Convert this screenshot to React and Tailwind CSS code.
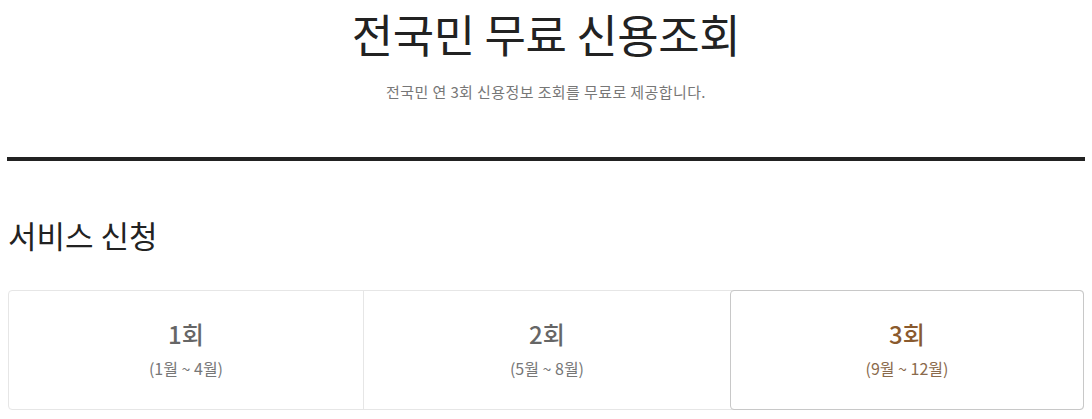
export default function App() {
  const rounds = [
    { n: "1회", range: "(1월 ~ 4월)", w: "w-[355px] border-r border-[#e6e6e6]" },
    { n: "2회", range: "(5월 ~ 8월)", w: "w-[366px]" },
    { n: "3회", range: "(9월 ~ 12월)", active: true },
  ];
  return (
    <div
      className="bg-white w-[1092px] h-[419px] overflow-hidden px-[7px]"
      style={{ fontFamily: '"Noto Sans CJK KR", "Noto Sans", sans-serif' }}
    >
      <header className="border-b-4 border-[#222] pt-[5px] pb-[55px] text-center">
        <h1 className="text-[45px] leading-[58px] text-[#222] font-normal tracking-[-0.4px]">
          전국민 무료 신용조회
        </h1>
        <p className="mt-[19px] text-[15px] leading-[20px] text-[#777] tracking-[0.4px]">
          전국민 연 3회 신용정보 조회를 무료로 제공합니다.
        </p>
      </header>

      <h2 className="mt-[53px] pl-[1px] text-[31px] leading-[42px] text-[#222] font-normal">
        서비스 신청
      </h2>

      <ul className="mt-[34px] mx-[1px] flex h-[120px] rounded-[4px] border border-[#e6e6e6]">
        {rounds.map((r) => (
          <li
            key={r.n}
            className={
              r.active
                ? "flex-1 -my-px -mr-px pb-[4px] flex flex-col items-center justify-center rounded-[4px] border border-[#c8c8c8]"
                : r.w + " pb-[4px] flex flex-col items-center justify-center"
            }
          >
            <span
              className={
                r.active
                  ? "text-[24px] leading-[30px] font-medium text-[#8a5a2e]"
                  : "text-[24px] leading-[30px] font-medium text-[#666]"
              }
            >
              {r.n}
            </span>
            <span
              className={
                r.active
                  ? "mt-[9px] text-[16px] leading-[20px] text-[#8a6a4c]"
                  : "mt-[9px] text-[16px] leading-[20px] text-[#777]"
              }
            >
              {r.range}
            </span>
          </li>
        ))}
      </ul>
    </div>
  );
}
